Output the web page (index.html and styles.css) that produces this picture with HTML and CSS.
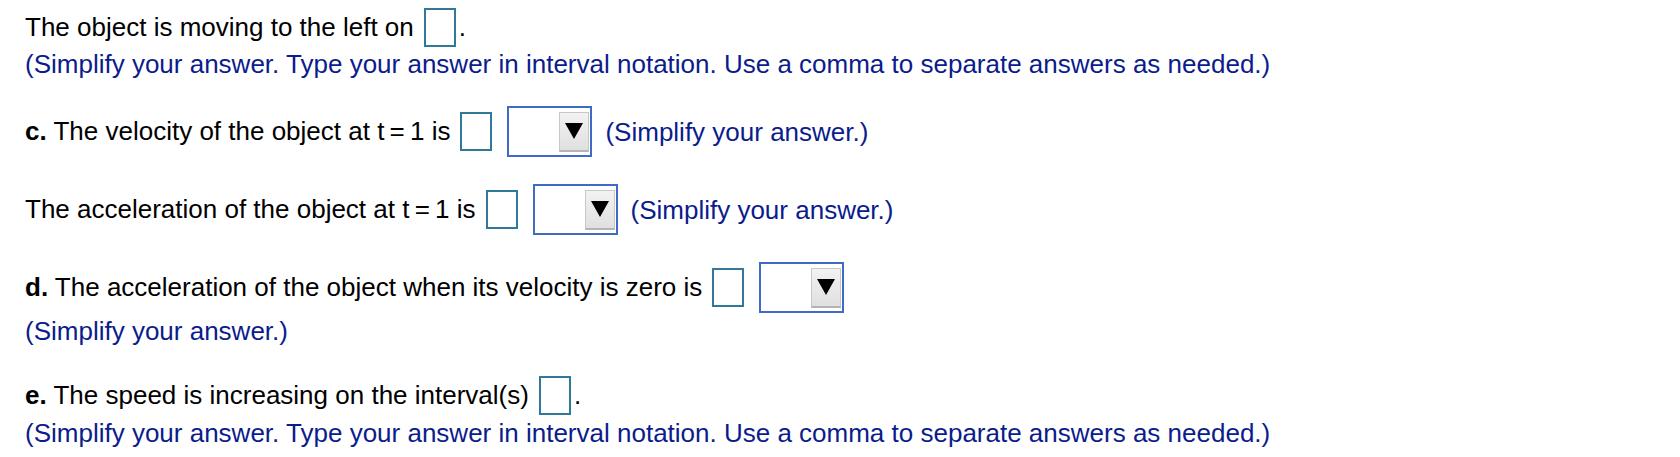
FILE: index.html
```html
<!DOCTYPE html>
<html lang="en">
<head>
    <meta charset="UTF-8">
    <meta name="viewport" content="width=device-width, initial-scale=1.0">
    <title>Motion Question</title>
    <link rel="stylesheet" href="styles.css">
</head>
<body>

    <div class="question">
        <div class="line first">
            The object is moving to the left on
            <input type="text" class="answer">
            <span class="dot">.</span>
        </div>
        <div class="hint gap-s">(Simplify your answer. Type your answer in interval notation. Use a comma to separate answers as needed.)</div>

        <div class="line part">
            <span><b>c.</b> The velocity of the object at t&#8201;=&#8201;1 is</span>
            <input type="text" class="answer">
            <span class="dropdown"><span class="dropdown-btn"></span></span>
            <span class="hint inline">(Simplify your answer.)</span>
        </div>

        <div class="line part">
            <span>The acceleration of the object at t&#8201;=&#8201;1 is</span>
            <input type="text" class="answer">
            <span class="dropdown"><span class="dropdown-btn"></span></span>
            <span class="hint inline">(Simplify your answer.)</span>
        </div>

        <div class="line part">
            <span><b>d.</b> The acceleration of the object when its velocity is zero is</span>
            <input type="text" class="answer">
            <span class="dropdown"><span class="dropdown-btn"></span></span>
        </div>
        <div class="hint gap-m">(Simplify your answer.)</div>

        <div class="line last">
            <span><b>e.</b> The speed is increasing on the interval(s)</span>
            <input type="text" class="answer">
            <span class="dot">.</span>
        </div>
        <div class="hint gap-m">(Simplify your answer. Type your answer in interval notation. Use a comma to separate answers as needed.)</div>
    </div>

</body>
</html>
```

FILE: styles.css
```css
* {
    margin: 0;
    padding: 0;
    box-sizing: border-box;
}

body {
    background: #fff;
    color: #000;
    font-family: "Liberation Sans", Arial, sans-serif;
    font-size: 26px;
}

.question {
    padding-left: 25px;
}

.line {
    display: flex;
    align-items: center;
    white-space: nowrap;
}

.line.first {
    height: 40px;
    margin-top: 7px;
}

.line.part {
    height: 51px;
    margin-top: 27px;
}

.line.part:first-of-type {
    margin-top: 28px;
}

.line.last {
    height: 40px;
    margin-top: 29px;
}

.hint {
    color: #0b1c8c;
    line-height: 30px;
}

.hint.inline {
    margin-left: 13px;
}

.gap-s {
    margin-top: 2px;
}

.gap-m {
    margin-top: 3px;
}

.answer {
    width: 32px;
    height: 39px;
    margin-left: 10px;
    border: 2px solid #2f7a9b;
    background: #fff;
    outline: none;
    font: inherit;
}

.dot {
    margin-left: 3px;
}

.dropdown {
    width: 85px;
    height: 51px;
    margin-left: 15px;
    border: 2px solid #3d6bc6;
    background: #fff;
    display: flex;
    justify-content: flex-end;
    align-items: center;
    padding-right: 1px;
}

.dropdown-btn {
    width: 30px;
    height: 40px;
    background: linear-gradient(#f2f2f2, #e0e0e0);
    border: 1px solid #c8c8c8;
    border-bottom: 2px solid #b4b4b4;
    display: flex;
    justify-content: center;
    align-items: center;
}

.dropdown-btn::after {
    content: "";
    border-left: 9px solid transparent;
    border-right: 9px solid transparent;
    border-top: 16px solid #000;
}
```
